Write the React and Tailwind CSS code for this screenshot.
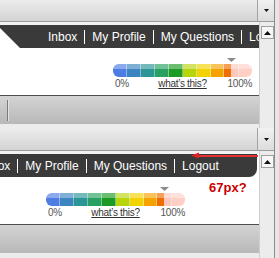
import React from "react";

const SEGS = [
  { w: "w-[14px]", c: "bg-[#4d7de4]", sep: true },
  { w: "w-[14px]", c: "bg-[#3c85c0]", sep: true },
  { w: "w-[14px]", c: "bg-[#2c9596]", sep: true },
  { w: "w-[14px]", c: "bg-[#27a060]", sep: true },
  { w: "w-[14px]", c: "bg-[#1c9a24]", sep: true },
  { w: "w-[14px]", c: "bg-[#b8d40c]", sep: true },
  { w: "w-[14px]", c: "bg-[#f2d200]", sep: true },
  { w: "w-[13px]", c: "bg-[#f5a300]", sep: true },
  { w: "w-[7px]", c: "bg-[#f06e00]", sep: false },
  { w: "w-[8px]", c: "bg-[#ffc8bd]", sep: true },
  { w: "w-[13px]", c: "bg-[#ffcfc6]", sep: false },
];

function Meter() {
  return (
    <div className="w-[139px]">
      <div className="h-[4px] pl-[114px] flex">
        <svg width="9" height="4" viewBox="0 0 9 4">
          <polygon points="0,0 9,0 4.5,4" fill="#8c8c8c" />
        </svg>
      </div>
      <div className="mt-[2px] h-[13px] rounded-[6px] overflow-hidden flex relative">
        {SEGS.map((s, i) => (
          <div
            key={i}
            className={`${s.w} ${s.c} h-full ${s.sep ? "border-r border-white/40" : ""}`}
          />
        ))}
        <div className="absolute left-0 right-0 top-0 h-[5px] bg-white/35" />
      </div>
      <div className="mt-px grid grid-cols-[1fr_auto_1fr] text-[10px] leading-[12px] tracking-[-0.3px]">
        <span className="text-[#555] pl-[2px]">0%</span>
        <span className="text-[#333] underline">what’s this?</span>
        <span className="text-[#555] text-right">100%</span>
      </div>
    </div>
  );
}

function Nav() {
  return (
    <div className="h-[23px] w-[324px] bg-[#3a3a3a] rounded-br-[8px] [clip-path:polygon(0_0,100%_0,100%_100%,20px_100%,0_3px)] flex items-center pl-[41px] text-white text-[12px] leading-none">
      <span className="px-[7px]">Inbox</span>
      <span className="w-px h-[14px] bg-white" />
      <span className="px-[7px]">My Profile</span>
      <span className="w-px h-[14px] bg-white" />
      <span className="px-[7px]">My Questions</span>
      <span className="w-px h-[14px] bg-white" />
      <span className="px-[7px]">Logout</span>
    </div>
  );
}

function Window({ shifted, height, strip }) {
  return (
    <div className={`${height} relative flex flex-col shrink-0`}>
      <div className="h-[23px] shrink-0 flex border-b border-[#9c9c9c] bg-gradient-to-b from-[#ededed] to-[#d3d3d3]">
        <div className="flex-1" />
        <div className="w-[17px] border-l border-[#a4a4a4] bg-gradient-to-b from-[#f2f2f2] to-[#dcdcdc] flex items-center justify-center">
          <svg width="5" height="3" viewBox="0 0 5 3">
            <polygon points="0,0 5,0 2.5,3" fill="#111" />
          </svg>
        </div>
      </div>
      <div className="flex flex-1 min-h-0">
        <div className="w-[259px] overflow-hidden flex flex-col bg-white">
          <div className="h-[3px] shrink-0 bg-[#f2f2f2]" />
          <div className={`w-[400px] shrink-0 flex flex-col ${shifted ? "-ml-[67px]" : ""}`}>
            <Nav />
            <div className="h-[47px] pl-[113px] pt-[10px]">
              <Meter />
            </div>
            <div className="h-[29px] border-t border-[#4e4e4e] bg-gradient-to-b from-[#d4d4d4] to-[#b8b8b8] flex items-center pl-[7px]">
              {!shifted && (
                <div className="flex h-[21px]">
                  <div className="w-px h-full bg-[#7a7a7a]" />
                  <div className="w-px h-full bg-[#e4e4e4]" />
                </div>
              )}
            </div>
            <div className={`${strip} bg-[#ececec]`} />
          </div>
        </div>
        <div className="w-[15px] bg-[#ececec] border-l border-[#cfcfcf] flex flex-col items-center">
          <div className="mt-[4px] w-[13px] h-[13px] border border-[#a0a0a0] bg-[#f7f7f7] flex items-center justify-center">
            <svg width="7" height="4" viewBox="0 0 7 4">
              <polygon points="0,4 7,4 3.5,0" fill="#111" />
            </svg>
          </div>
        </div>
      </div>
      {shifted && (
        <>
          <div className="absolute left-[191px] top-[24px] w-[67px] h-[7px] z-10 flex items-center">
            <svg width="8" height="7" viewBox="0 0 8 7" className="shrink-0">
              <polygon points="0,3.5 8,0.5 8,6.5" fill="#e02424" />
            </svg>
            <div className="flex-1 h-[2px] bg-[#e43030]" />
          </div>
          <div className="absolute left-[209px] top-[52px] text-[13px] font-bold leading-[15px] text-[#cc0000]">
            67px?
          </div>
        </>
      )}
    </div>
  );
}

export default function App() {
  return (
    <div className="w-[279px] h-[258px] overflow-hidden flex bg-white font-['Liberation_Sans',Arial,sans-serif]">
      <div className="w-[274px] flex flex-col">
        <div className="-mt-px">
          <Window shifted={false} height="h-[129px]" strip="h-[4px]" />
        </div>
        <Window shifted={true} height="h-[130px]" strip="h-[5px]" />
      </div>
      <div className="w-[5px] border-l border-[#8c8c8c] bg-[#e6e6e6]" />
    </div>
  );
}
